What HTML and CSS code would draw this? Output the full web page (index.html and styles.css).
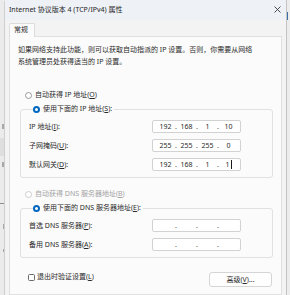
FILE: index.html
```html
<!DOCTYPE html>
<html lang="zh-CN">
<head>
<meta charset="utf-8">
<title>Internet 协议版本 4 (TCP/IPv4) 属性</title>
<link rel="stylesheet" href="styles.css">
</head>
<body>
<div class="screen">
  <div class="bgstrip">
    <div class="bg-mark m1"></div>
    <div class="bg-block"></div>
    <div class="bg-mark m2"></div>
    <div class="bg-line"></div>
    <div class="bg-mark m3"></div>
    <div class="bg-mark m4"></div>
  </div>
  <div class="dialog">
    <div class="titlebar">
      <span class="title">Internet 协议版本 4 (TCP/IPv4) 属性</span>
      <svg class="close" width="7" height="7" viewBox="0 0 7 7"><path d="M0.5 0.5 L6.5 6.5 M6.5 0.5 L0.5 6.5" stroke="#3a3a3a" stroke-width="0.9" fill="none"/></svg>
    </div>
    <div class="tabs"><div class="tab">常规</div></div>
    <div class="panel">
      <p class="intro">如果网络支持此功能，则可以获取自动指派的 IP 设置。否则，你需要从网络<br>系统管理员处获得适当的 IP 设置。</p>
      <div class="opt"><span class="radio"></span>自动获得 IP 地址(<u>O</u>)</div>
      <fieldset class="group">
        <legend class="opt"><span class="radio checked"></span>使用下面的 IP 地址(<u>S</u>):</legend>
        <div class="fields">
          <div class="lbl">IP 地址(<u>I</u>):</div>
          <div class="ipbox"><span class="seg">192</span><span class="dot">.</span><span class="seg">168</span><span class="dot">.</span><span class="seg">1</span><span class="dot">.</span><span class="seg">10</span></div>
          <div class="lbl">子网掩码(<u>U</u>):</div>
          <div class="ipbox"><span class="seg">255</span><span class="dot">.</span><span class="seg">255</span><span class="dot">.</span><span class="seg">255</span><span class="dot">.</span><span class="seg">0</span></div>
          <div class="lbl">默认网关(<u>D</u>):</div>
          <div class="ipbox"><span class="seg">192</span><span class="dot">.</span><span class="seg">168</span><span class="dot">.</span><span class="seg">1</span><span class="dot">.</span><span class="seg">1<span class="caret"></span></span></div>
        </div>
      </fieldset>
      <div class="opt opt-dns disabled"><span class="radio"></span>自动获得 DNS 服务器地址(<u>B</u>)</div>
      <fieldset class="group group-dns">
        <legend class="opt"><span class="radio checked"></span>使用下面的 DNS 服务器地址(<u>E</u>):</legend>
        <div class="fields">
          <div class="lbl">首选 DNS 服务器(<u>P</u>):</div>
          <div class="ipbox"><span class="seg"></span><span class="dot">.</span><span class="seg"></span><span class="dot">.</span><span class="seg"></span><span class="dot">.</span><span class="seg"></span></div>
          <div class="lbl">备用 DNS 服务器(<u>A</u>):</div>
          <div class="ipbox"><span class="seg"></span><span class="dot">.</span><span class="seg"></span><span class="dot">.</span><span class="seg"></span><span class="dot">.</span><span class="seg"></span></div>
        </div>
      </fieldset>
      <div class="bottom">
        <div class="check"><span class="box"></span>退出时验证设置(<u>L</u>)</div>
        <div class="btn">高级(<u>V</u>)...</div>
      </div>
    </div>
  </div>
  <div class="rightstrip"><div class="blue"></div></div>
</div>
</body>
</html>
```

FILE: styles.css
```css
* { box-sizing: border-box; }
html, body { margin: 0; padding: 0; }
body {
  background: #e8e8e8;
  font-family: "Noto Sans", "Noto Sans CJK SC", sans-serif;
  font-size: 7px;
  color: #2a2a2a;
}
.screen {
  width: 290px;
  height: 295px;
  overflow: hidden;
  display: flex;
  background: #e8e8e8;
}
.bgstrip {
  width: 4px;
  flex: none;
  display: flex;
  flex-direction: column;
  align-items: flex-end;
  overflow: hidden;
  background: #ebebeb;
}
.bg-mark {
  width: 2px;
  height: 5px;
  background: #8a8a8a;
  opacity: 0.7;
}
.m1 { margin-top: 124px; }
.bg-block { margin-top: 9px; width: 4px; height: 18px; background: #dedede; }
.m2 { margin-top: 6px; }
.bg-line { margin-top: 36px; width: 4px; height: 1px; background: #8d8d8d; }
.m3 { margin-top: 20px; width: 1px; }
.m4 { margin-top: 20px; width: 1px; height: 3px; }

.dialog {
  width: 283px;
  flex: none;
  background: #f3f3f3;
  border-left: 1px solid #cfcfcf;
  border-right: 1px solid #c4c4c4;
  border-top-left-radius: 3px;
  display: flex;
  flex-direction: column;
}
.titlebar {
  height: 20px;
  flex: none;
  display: flex;
  align-items: center;
  justify-content: space-between;
  padding: 0 5px 1px 4px;
  background: #eef1f6;
}
.title { line-height: 12px; color: #1f1f1f; }
.close { display: block; }

.tabs {
  height: 17px;
  flex: none;
  display: flex;
  align-items: flex-end;
  padding-left: 4px;
  background: #f3f3f3;
}
.tab {
  position: relative;
  z-index: 1;
  height: 14px;
  padding: 0 6px 2px 4px;
  line-height: 11px;
  border: 1px solid #dcdcdc;
  border-bottom: none;
  background: #fbfbfb;
  border-radius: 2px 2px 0 0;
}
.panel {
  flex: 1;
  margin: -1px 0 0 4px;
  width: 273px;
  border: 1px solid #e0e0e0;
  background: #fbfbfb;
  padding: 7px 8px 0 8px;
}
.intro {
  margin: 0;
  line-height: 12px;
  white-space: nowrap;
}
.opt {
  display: flex;
  align-items: center;
  line-height: 12px;
  height: 12px;
  margin-top: 21px;
  margin-left: 7px;
  white-space: nowrap;
}
.radio {
  width: 7px;
  height: 7px;
  border-radius: 50%;
  border: 1px solid #9a9a9a;
  background: #fff;
  margin-right: 3px;
  flex: none;
}
.radio.checked {
  border: 2px solid #0067c0;
  background: #fff;
}
.disabled { color: #a3a3a3; }
.disabled .radio { border-color: #cdcdcd; }

.group {
  margin: 2px 0 0 2px;
  padding: 5px 0 6px 8px;
  border: 1px solid #e1e1e1;
  border-radius: 3px;
  min-width: 0;
}
.group legend.opt {
  margin: 0 0 0 4px;
  padding: 0 2px 0 0;
}
.fields {
  display: grid;
  grid-template-columns: 123px 89px;
  row-gap: 6px;
  align-items: center;
}
.lbl { line-height: 12px; white-space: nowrap; }
.ipbox {
  height: 13px;
  display: flex;
  align-items: center;
  padding-left: 3px;
  background: #fff;
  border: 1px solid #d2d2d2;
  border-radius: 2px;
  line-height: 11px;
}
.seg {
  width: 19px;
  display: flex;
  justify-content: center;
  align-items: center;
}
.dot { width: 2px; text-align: center; color: #444; }
.caret {
  display: inline-block;
  width: 1px;
  height: 9px;
  background: #1a1a1a;
  margin-left: 1px;
}
.opt-dns { margin-top: 10px; }

.bottom {
  margin-top: 13px;
  display: flex;
  justify-content: space-between;
  align-items: flex-start;
  padding: 0 1px 0 10px;
}
.check {
  display: flex;
  align-items: center;
  line-height: 12px;
  height: 12px;
}
.box {
  width: 7px;
  height: 7px;
  border: 1px solid #6a6a6a;
  border-radius: 1.5px;
  background: #fff;
  margin-right: 2px;
}
.btn {
  margin-top: 1px;
  width: 63px;
  height: 15px;
  display: flex;
  align-items: center;
  justify-content: center;
  background: #fefefe;
  border: 1px solid #d5d5d5;
  border-radius: 3px;
  line-height: 11px;
}

.rightstrip {
  flex: 1;
  background: #ececec;
  display: flex;
  flex-direction: column;
}
.blue {
  margin-top: 12px;
  width: 1px;
  height: 8px;
  background: #3b6fa8;
}
```
